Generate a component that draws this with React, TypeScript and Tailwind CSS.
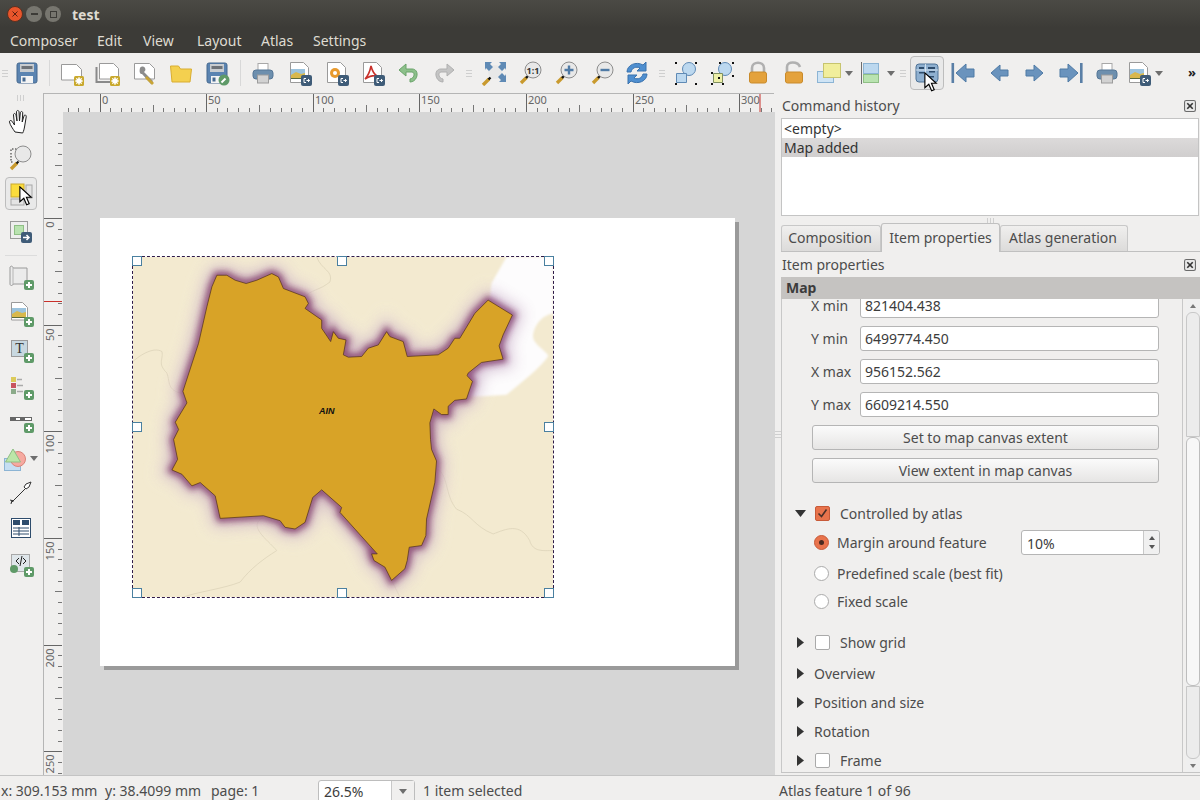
import type { ReactNode } from "react";

const FONT = "font-['Noto_Sans','Open_Sans',sans-serif]";

const PX_PER_MM = 2.1333;

function Ico({ children, size = 26 }: { children: ReactNode; size?: number }) {
  return (
    <svg width={size} height={size} viewBox="0 0 26 26" className="block shrink-0">
      {children}
    </svg>
  );
}

const PlusBadge = ({ x = 16, y = 16 }: { x?: number; y?: number }) => (
  <g transform={`translate(${x} ${y})`}>
    <rect width="10" height="10" rx="2" fill="#5f9a68" />
    <path d="M5 2v6M2 5h6" stroke="#fff" strokeWidth="2" />
  </g>
);

const ExportBadge = () => (
  <g transform="translate(14 15)">
    <rect width="11" height="11" rx="2" fill="#3f5c78" />
    <path d="M5 3.5H3v4h2M5.5 5.5h3M7 4l1.6 1.5L7 7" stroke="#fff" strokeWidth="1" fill="none" />
  </g>
);

const Gear = () => (
  <g transform="translate(15 16)">
    <rect width="10" height="10" rx="1.5" fill="#c9a92e" />
    <circle cx="5" cy="5" r="2.8" fill="#fff" />
    <path d="M5 1v8M1 5h8M2.2 2.2l5.6 5.6M7.8 2.2L2.2 7.8" stroke="#fff" strokeWidth="1" />
  </g>
);

const Sheet = ({ w = 18 }: { w?: number }) => (
  <path d={`M3.5 2.5h${w - 5}l5 5V22.5h-${w}z`} fill="#fff" stroke="#9a9a9a" />
);

const Floppy = () => (
  <>
    <rect x="3" y="3" width="20" height="20" rx="2" fill="#5b84b1" stroke="#46698f" />
    <rect x="6" y="4" width="14" height="8" fill="#c8ccd0" />
    <rect x="7.5" y="6" width="11" height="3" fill="#6d7278" />
    <rect x="7" y="16" width="12" height="7" fill="#f4f4f4" />
    <rect x="8.5" y="17.5" width="3" height="4" fill="#46698f" />
  </>
);

const Printer = () => (
  <>
    <rect x="8" y="3.5" width="10" height="7" fill="#fff" stroke="#a8a8a8" />
    <rect x="3" y="10" width="20" height="9" rx="3" fill="#6d8fae" stroke="#557696" />
    <rect x="7.5" y="15" width="11" height="8" fill="#d2d2d2" stroke="#9c9c9c" />
  </>
);

const Landscape = ({ x = 4, y = 9 }: { x?: number; y?: number }) => (
  <g transform={`translate(${x} ${y})`}>
    <rect width="14" height="10" fill="#9cc3dd" />
    <path d="M0 6l5-3 5 2 4-1v6H0z" fill="#d8b84c" />
    <path d="M0 9h14v1H0z" fill="#5b6a3a" />
  </g>
);

const Lens = ({ children }: { children?: ReactNode }) => (
  <>
    <path d="M4 23l5.5-5.5" stroke="#c99a2e" strokeWidth="3.4" />
    <path d="M9 18l2-2" stroke="#111" strokeWidth="2.4" />
    <circle cx="16" cy="10" r="8" fill="#e8e8e8" stroke="#8d8d8d" />
    {children}
  </>
);

const Lock = ({ open = false }: { open?: boolean }) => (
  <>
    <path
      d={open ? "M6 12V7c0-6 11-6 13 0" : "M7 13V8c0-7 12-7 12 0v5"}
      fill="none"
      stroke="#b0b0b0"
      strokeWidth="2.6"
    />
    <rect x="4.5" y="12" width="17" height="11" rx="2" fill="#e4a23c" stroke="#c98a2a" />
  </>
);

const NavArrow = ({ d, bar }: { d: string; bar?: number }) => (
  <>
    <path d={d} fill="#6a93bd" stroke="#4f7aa5" />
    {bar !== undefined && <rect x={bar} y="3" width="2.6" height="20" fill="#5a7fa6" />}
  </>
);

const DropArrow = () => (
  <svg width="8" height="5" viewBox="0 0 8 5" className="shrink-0">
    <path d="M0 0h8L4 5z" fill="#6e6e6e" />
  </svg>
);

function Grip({ vertical = false }: { vertical?: boolean }) {
  return (
    <div className={vertical ? "flex flex-col gap-[2px]" : "flex gap-[2px]"}>
      <div className={vertical ? "w-[6px] h-px bg-[#cfcfcf]" : "h-[6px] w-px bg-[#cfcfcf]"} />
      <div className={vertical ? "w-[6px] h-px bg-[#cfcfcf]" : "h-[6px] w-px bg-[#cfcfcf]"} />
      <div className={vertical ? "w-[6px] h-px bg-[#cfcfcf]" : "h-[6px] w-px bg-[#cfcfcf]"} />
    </div>
  );
}

const Cursor = () => (
  <svg width="14" height="21" viewBox="0 0 16 24" className="absolute">
    <path d="M1 1v17l4.5-4 3.2 7.5 3-1.3-3.2-7.3H14z" fill="#fff" stroke="#000" strokeWidth="1.3" />
  </svg>
);

// top toolbar, left to right
const topItems: { w: number; node?: ReactNode; grip?: boolean; sep?: boolean; active?: boolean; arrow?: boolean }[] = [
  { w: 9, grip: true },
  { w: 36, node: <Ico><Floppy /></Ico> },
  { w: 9, sep: true },
  { w: 36, node: <Ico><path d="M2.5 4.5h15l5 5V20h-20z" fill="#fff" stroke="#9a9a9a" /><Gear /></Ico> },
  { w: 36, node: <Ico><path d="M1.5 7v15h16" fill="none" stroke="#8a8a8a" strokeWidth="2" /><path d="M4.5 3.5h14l5 5V19h-19z" fill="#fff" stroke="#9a9a9a" /><Gear /></Ico> },
  { w: 37, node: <Ico><path d="M2.5 3.5h15l5 5V19h-20z" fill="#fff" stroke="#9a9a9a" /><path d="M8 8c1-2 4-2 5 0s0 3-1 4l9 9-2 3-9-10c-2 0-3-2-2-6z" fill="#8c8c8c" /><path d="M15 16l7 7-2 2-7-7z" fill="#c8a436" /></Ico> },
  { w: 36, node: <Ico><path d="M2.5 6h8l2 3h11l-1.5 13H4z" fill="#f4d04f" stroke="#d9ad30" /></Ico> },
  { w: 36, node: <Ico><Floppy /><circle cx="20" cy="20" r="5.5" fill="#5f9a68" /><path d="M17.5 22.5l4-4" stroke="#fff" strokeWidth="2" /></Ico> },
  { w: 10, sep: true },
  { w: 36, node: <Ico><Printer /></Ico> },
  { w: 37, node: <Ico><Sheet /><Landscape /><ExportBadge /></Ico> },
  { w: 37, node: <Ico><Sheet /><circle cx="11" cy="13" r="5" fill="#e89a2e" /><circle cx="11" cy="13" r="2" fill="#fff" /><ExportBadge /></Ico> },
  { w: 36, node: <Ico><Sheet /><path d="M11 6c-1 5-3 10-6 13 5-3 9-4 12-3-3-2-5-6-6-10z" fill="none" stroke="#c8302a" strokeWidth="1.6" /><ExportBadge /></Ico> },
  { w: 35, node: <Ico><path d="M10 4L3 10l7 6v-4h6c3 0 3 6-2 7v3c8 0 10-13 2-13h-6z" fill="#8cc08a" stroke="#6aa36a" /></Ico> },
  { w: 36, node: <Ico><path d="M16 4l7 6-7 6v-4h-6c-3 0-3 6 2 7v3c-8 0-10-13-2-13h6z" fill="#c4c4c4" stroke="#b0b0b0" /></Ico> },
  { w: 14, grip: true },
  { w: 36, node: <Ico><circle cx="14" cy="12" r="7" fill="#e8e8e8" /><path d="M4 2h7l-2 2 3 3-4 4-3-3-1 2zM25 2h-7l2 2-3 3 4 4 3-3 1 2zM25 22h-7l2-2-3-3 4-4 3 3 1-2z" fill="#5f8ab5" /><path d="M2 25l6-6" stroke="#c99a2e" strokeWidth="3.4" /><path d="M7.5 19.5l2-2" stroke="#111" strokeWidth="2.4" /></Ico> },
  { w: 36, node: <Ico><Lens /><text x="16" y="13.500" textAnchor="middle" fontSize="9" fontWeight="700" fontFamily="'Noto Sans', sans-serif" fill="#333">1:1</text></Ico> },
  { w: 36, node: <Ico><Lens /><path d="M16 5.5v9M11.5 10h9" stroke="#4f7aa5" strokeWidth="2.4" /></Ico> },
  { w: 35, node: <Ico><Lens /><path d="M11.5 10h9" stroke="#4f7aa5" strokeWidth="2.4" /></Ico> },
  { w: 36, node: <Ico><path d="M3 12C3 5 12 1 19 5l3-3v9h-9l3-3c-4-2-8 0-9 4z" fill="#4f8fd0" stroke="#3a72ad" /><path d="M23 14c0 7-9 11-16 7l-3 3v-9h9l-3 3c4 2 8 0 9-4z" fill="#4f8fd0" stroke="#3a72ad" /></Ico> },
  { w: 13, grip: true },
  { w: 36, node: <Ico><circle cx="16" cy="9" r="6.5" fill="#bcd8ef" stroke="#5f8ab5" /><path d="M3.5 13.5h10v9h-10z" fill="#bcd8ef" stroke="#5f8ab5" /><path d="M2 2h2v2H2zM22 2h2v2h-2zM2 23h2v2H2zM22 23h2v2h-2z" fill="#111" /></Ico> },
  { w: 36, node: <Ico><circle cx="16" cy="9" r="6.5" fill="#bcd8ef" stroke="#5f8ab5" /><path d="M4.5 13.5h9v9h-9z" fill="#eef0a8" stroke="#7f8f60" /><path d="M10 2h2v2h-2zM23 2h2v2h-2zM2 12h2v2H2zM9 17h2v2H9zM23 15h2v2h-2zM2 23h2v2H2zM13 23h2v2h-2z" fill="#111" /></Ico> },
  { w: 36, node: <Ico><Lock /></Ico> },
  { w: 36, node: <Ico><Lock open /></Ico> },
  { w: 44, arrow: true, node: <Ico><rect x="1.5" y="11.5" width="16" height="11" fill="#cfe4f5" stroke="#8cb4d4" /><rect x="7.5" y="3.5" width="17" height="14" fill="#f1ee9c" stroke="#c7c46e" /></Ico> },
  { w: 40, arrow: true, node: <Ico><path d="M3.5 2v22" stroke="#6e6e6e" /><rect x="5.5" y="3.5" width="15" height="10" fill="#bcd8ef" stroke="#8cb4d4" /><rect x="5.5" y="14.5" width="15" height="8" fill="#b9e3b0" stroke="#8fbf85" /></Ico> },
  { w: 13, grip: true },
  { w: 36, active: true, node: <Ico><rect x="2" y="4" width="22" height="18" rx="3" fill="#8fb0d0" stroke="#4f7296" /><path d="M5 7h5v2H5zM14 7h7v2h-7zM15 11h6v1.500h-6zM5 12h5v1.500H5zM14 16h6v1.500h-6z" fill="#2e4c6c" /><path d="M11.500 4v18M2 10h22" stroke="#e3edf5" strokeWidth=".8" /></Ico> },
  { w: 36, node: <Ico><NavArrow d="M6 13l10-9v5h8v8h-8v5z" bar={1.5} /></Ico> },
  { w: 36, node: <Ico><NavArrow d="M5 13l9-8v5h8v6h-8v5z" /></Ico> },
  { w: 36, node: <Ico><NavArrow d="M21 13l-9-8v5H4v6h8v5z" /></Ico> },
  { w: 36, node: <Ico><NavArrow d="M20 13L10 4v5H2v8h8v5z" bar={22} /></Ico> },
  { w: 36, node: <Ico><Printer /></Ico> },
  { w: 38, arrow: true, node: <Ico><Sheet /><Landscape /><ExportBadge /></Ico> },
];

const leftItems: { h: number; node?: ReactNode; active?: boolean; sep?: boolean; arrow?: boolean }[] = [
  { h: 36, node: <Ico><path d="M7 24c-2-3-5-7-5.500-10-.2-2 2-2 3 0l2 3-1-10c0-2 2-2 2.500 0l1 6-.5-9c0-2 2.500-2 2.500 0l.5 9 .8-8c.2-2 2.400-2 2.400 0l-.5 9 1.800-6c.5-2 2.500-1 2.200 1l-1.500 9c-.5 3-1 5-2 7z" fill="#fff" stroke="#222" /></Ico> },
  { h: 37, node: <Ico><path d="M3 6V4h8M3 8v9M3 17h3" stroke="#222" strokeDasharray="1.5 1.5" fill="none" /><path d="M3 24l6-6" stroke="#c99a2e" strokeWidth="3.4" /><path d="M8.500 18.500l2-2" stroke="#111" strokeWidth="2" /><circle cx="15" cy="9" r="8" fill="#e8e8e8" stroke="#8d8d8d" /></Ico> },
  { h: 35, active: true, node: <Ico><rect x="3" y="3" width="13" height="13" fill="#fbdc3c" stroke="#c9a92e" /><rect x="18" y="4" width="6" height="13" fill="#e4e4e4" stroke="#a8a8a8" /><rect x="3" y="18" width="13" height="6" fill="#e4e4e4" stroke="#a8a8a8" /></Ico> },
  { h: 41, node: <Ico><rect x="2.500" y="2.500" width="17" height="17" fill="#eeeeee" stroke="#9a9a9a" /><rect x="6.500" y="6.500" width="9" height="9" fill="#b9e3b0" stroke="#8fbf85" /><rect x="13" y="13" width="11" height="11" rx="2" fill="#3f5c78" /><path d="M15 18.500h6M18.500 16l2.500 2.500-2.500 2.500" stroke="#fff" strokeWidth="1.500" fill="none" /></Ico> },
  { h: 7, sep: true },
  { h: 36, node: <Ico><path d="M2 3c2-2 3 0 3 1h14v16H5c0 2-3 2-3 0z" fill="#ebebeb" stroke="#9a9a9a" /><path d="M5 4v16" stroke="#b5b5b5" /><PlusBadge /></Ico> },
  { h: 37, node: <Ico><path d="M3.500 1.500h11l5 5V19h-16z" fill="#fff" stroke="#9a9a9a" /><Landscape x={4} y={7} /><PlusBadge /></Ico> },
  { h: 36, node: <Ico><rect x="3.500" y="3.500" width="16" height="16" fill="#c8d8e0" stroke="#9a9a9a" /><text x="11.500" y="16" textAnchor="middle" fontFamily="'Liberation Serif', serif" fontSize="14" fill="#333">T</text><PlusBadge /></Ico> },
  { h: 37, node: <Ico><rect x="3" y="3" width="5" height="5" fill="#dccb5a" /><rect x="3" y="9" width="5" height="5" fill="#c8555f" /><rect x="3" y="15" width="5" height="5" fill="#8cab8a" /><path d="M9 5.500h5M9 11.500h6M9 17.500h6" stroke="#aaa" strokeWidth="1.500" /><PlusBadge /></Ico> },
  { h: 37, node: <Ico><rect x="2.500" y="6.500" width="21" height="3" fill="#fff" stroke="#666" /><path d="M3 8h5M12 8h5" stroke="#666" strokeWidth="3" /><PlusBadge y={12} /></Ico> },
  { h: 33, arrow: true, node: <Ico><rect x="1.500" y="12.500" width="16" height="12" fill="#c6def2" stroke="#8cb4d4" /><circle cx="15" cy="13" r="7.500" fill="#f6a9a0" stroke="#d98378" /><path d="M10 3l7.500 13h-15z" fill="#bce6a8" stroke="#8fbf85" /></Ico> },
  { h: 35, node: <Ico><path d="M3 23L20 6" stroke="#333" /><path d="M18 4l5-2-2 5-3 2-2-2z" fill="#fff" stroke="#333" /><path d="M2 20l4 1M3 24l1-4" stroke="#333" /></Ico> },
  { h: 36, node: <Ico><rect x="3.500" y="3.500" width="19" height="19" fill="#fff" stroke="#2e4c6c" /><path d="M5 5h7v5H5zM14 5h7v5h-7z" fill="#2e4c6c" /><path d="M5 13h16M5 16h16M5 19h16M11 12v9" stroke="#2e4c6c" /></Ico> },
  { h: 35, node: <Ico><rect x="3.500" y="3.500" width="18" height="17" fill="#dfe6ea" stroke="#a8a8a8" /><path d="M11 7l-3 3 3 3M15 7l3 3-3 3M14 5l-2 10" stroke="#222" fill="none" /><circle cx="6" cy="18" r="4" fill="#5f9a68" /><PlusBadge /></Ico> },
];

const mapOutline =
  "M290 105L320 105L345 120L378 130L410 120L455 100L475 110L490 145L555 170L565 190L555 205L605 240L605 265L632 305L640 275L655 295L678 300L670 345L685 352L725 350L745 325L775 315L800 275L810 290L850 305L862 350L955 345L985 325L1005 295L1020 295L1065 220L1105 180L1178 225L1150 285L1138 318L1150 358L1085 368L1045 400L1042 408L1058 425L1040 478L1005 482L985 500L985 525L965 525L942 508L930 550L932 600L935 630L950 665L945 730L920 840L918 890L905 920L868 925L862 965L855 990L815 1025L795 985L762 965L755 945L772 945L745 915L660 820L665 805L605 752L578 775L555 850L525 870L495 865L480 845L430 830L300 838L285 770L240 730L215 740L185 705L155 692L172 660L160 600L175 570L165 548L200 490L188 455L235 310L260 200L275 140Z";

function MapDrawing() {
  return (
    <svg viewBox="38 50 1262 1025" className="block w-full h-full" preserveAspectRatio="none">
      <defs>
        <filter id="glowWide" x="-20%" y="-20%" width="140%" height="140%">
          <feGaussianBlur stdDeviation="22" />
        </filter>
        <filter id="glowTight" x="-20%" y="-20%" width="140%" height="140%">
          <feGaussianBlur stdDeviation="9" />
        </filter>
        <filter id="edgeSoft" x="-20%" y="-20%" width="140%" height="140%">
          <feGaussianBlur stdDeviation="3" />
        </filter>
      </defs>
      <rect x="38" y="50" width="1262" height="1025" fill="#f3ead0" />
      <g fill="none" stroke="#d2c9ae" strokeWidth="2" opacity="0.8">
        <path d="M38 365C60 345 100 320 125 335C130 360 110 370 140 400C150 430 140 450 185 462" />
        <path d="M590 50C605 90 640 90 630 125C600 150 570 150 555 170" />
        <path d="M950 690C985 700 975 770 1010 810C1060 830 1060 860 1120 885C1160 870 1200 850 1230 905C1240 940 1270 935 1300 935" />
        <path d="M430 835C380 860 440 900 470 935C430 960 390 990 360 1030C310 1050 230 1060 190 1075" />
        <path d="M815 1025L840 1075" />
      </g>
      <path d={mapOutline} fill="#fbf6e6" stroke="#fbf6e6" strokeWidth="70" opacity="0.7" filter="url(#glowWide)" />
      <path
        d="M1160 50H1300V220C1265 225 1240 260 1240 290C1240 315 1290 340 1285 350C1260 385 1210 425 1160 465L1090 470L1040 470L1042 400L1110 180L1115 130Z"
        fill="#fdfcfd"
        filter="url(#edgeSoft)"
      />
      <path d={mapOutline} fill="none" stroke="#9a6a98" strokeWidth="50" opacity="0.45" filter="url(#glowWide)" />
      <path d={mapOutline} fill="none" stroke="#71245a" strokeWidth="20" opacity="0.8" filter="url(#glowTight)" />
      <path d={mapOutline} fill="#d8a327" stroke="#4b2c18" strokeWidth="2" />
    </svg>
  );
}

const handleBase = "absolute w-[10px] h-[10px] bg-white border border-[#4a80a0]";

function Handles() {
  return (
    <>
      <div className={`${handleBase} left-[-1px] top-[-1px]`} />
      <div className={`${handleBase} left-[204px] top-[-1px]`} />
      <div className={`${handleBase} right-[-1px] top-[-1px]`} />
      <div className={`${handleBase} left-[-1px] top-[165px]`} />
      <div className={`${handleBase} right-[-1px] top-[165px]`} />
      <div className={`${handleBase} left-[-1px] bottom-[-1px]`} />
      <div className={`${handleBase} left-[204px] bottom-[-1px]`} />
      <div className={`${handleBase} right-[-1px] bottom-[-1px]`} />
    </>
  );
}

function TopRuler() {
  const x0 = 56.5;
  const ticks = [];
  for (let mm = -15; mm <= 315; mm += 5) {
    const x = Math.round(x0 + mm * PX_PER_MM) + 0.5;
    if (x > 729) break;
    const major = mm % 50 === 0;
    const mid = mm % 25 === 0;
    ticks.push(<path key={mm} d={`M${x} 19V${major ? 0 : mid ? 12 : 15}`} stroke={major ? "#666" : "#777"} />);
    if (major && mm >= 0)
      ticks.push(
        <text key={`t${mm}`} x={x + 1.5} y={11} fontSize="11" fill="#666" fontFamily="'Noto Sans', sans-serif">
          {mm}
        </text>,
      );
  }
  return (
    <svg width="732" height="19" className="block shrink-0">
      {ticks}
      <path d="M717 0V19" stroke="#c8302a" />
      <path d="M.5 0V19M0 .5H731" stroke="#b5b5b5" fill="none" />
    </svg>
  );
}

function SideRuler() {
  const y0 = 106;
  const ticks = [];
  for (let mm = -40; mm <= 265; mm += 5) {
    const y = Math.round(y0 + mm * PX_PER_MM) + 0.5;
    if (y < 8 || y > 662) continue;
    const major = mm % 50 === 0;
    const mid = mm % 25 === 0;
    ticks.push(<path key={mm} d={`M19 ${y}H${major ? 0 : mid ? 12 : 15}`} stroke={major ? "#666" : "#777"} />);
    if (major && mm >= 0)
      ticks.push(
        <text
          key={`t${mm}`}
          transform={`translate(11 ${y + 3}) rotate(-90)`}
          textAnchor="end"
          fontSize="11"
          fill="#666"
          fontFamily="'Noto Sans', sans-serif"
        >
          {mm}
        </text>,
      );
  }
  return (
    <svg width="20" height="663" className="block shrink-0">
      {ticks}
      <path d="M0 189.500H19" stroke="#c8302a" />
      <path d="M.5 0V663" stroke="#b5b5b5" />
    </svg>
  );
}

function CloseBox() {
  return (
    <svg width="12" height="12" viewBox="0 0 11 11">
      <rect x=".5" y=".5" width="10" height="10" rx="1.500" fill="#e8e8e8" stroke="#6b6b6b" />
      <path d="M3 3l5 5M8 3L3 8" stroke="#333" strokeWidth="1.500" />
    </svg>
  );
}

function Arrow({ open = false }: { open?: boolean }) {
  return open ? (
    <svg width="11" height="7" viewBox="0 0 11 7" className="shrink-0">
      <path d="M0 0h11L5.500 7z" fill="#333" />
    </svg>
  ) : (
    <svg width="7" height="11" viewBox="0 0 7 11" className="shrink-0">
      <path d="M0 0l7 5.500L0 11z" fill="#333" />
    </svg>
  );
}

function Check({ checked = false }: { checked?: boolean }) {
  return checked ? (
    <div className="w-[15px] h-[15px] rounded-[2px] bg-[#e8734c] border border-[#c85a38] flex items-center justify-center shrink-0">
      <svg width="11" height="11" viewBox="0 0 11 11">
        <path d="M1.500 5.500l3 3 5-7" stroke="#4a3028" strokeWidth="1.600" fill="none" />
      </svg>
    </div>
  ) : (
    <div className="w-[15px] h-[15px] rounded-[2px] bg-white border border-[#aaa] shrink-0" />
  );
}

function Radio({ on = false }: { on?: boolean }) {
  return on ? (
    <div className="w-[15px] h-[15px] rounded-full bg-[#e8734c] border border-[#c85a38] flex items-center justify-center shrink-0">
      <div className="w-[5px] h-[5px] rounded-full bg-[#4a2a20]" />
    </div>
  ) : (
    <div className="w-[15px] h-[15px] rounded-full bg-white border border-[#aaa] shrink-0" />
  );
}

function CoordRow({ label, value }: { label: string; value: string }) {
  return (
    <div className="flex items-center h-[33px]">
      <div className="w-[49px] ml-[29px] shrink-0">{label}</div>
      <div className="w-[299px] h-[25px] bg-white border border-[#b5b5b5] rounded-[3px] flex items-center pl-[4px] text-[#3c3c3c]">
        {value}
      </div>
    </div>
  );
}

function PanelButton({ children }: { children: ReactNode }) {
  return (
    <div className="flex items-center h-[33px] pl-[30px]">
      <div className="w-[347px] h-[25px] rounded-[3px] border border-[#b5b5b5] bg-gradient-to-b from-[#fbfbfb] to-[#e6e5e4] flex items-center justify-center">
        {children}
      </div>
    </div>
  );
}

function PropertiesBody() {
  return (
    <div className="flex-1 overflow-hidden text-[#4c4c4c]">
      <div className="mt-[-10px]">
        <CoordRow label="X min" value="821404.438" />
        <CoordRow label="Y min" value="6499774.450" />
        <CoordRow label="X max" value="956152.562" />
        <CoordRow label="Y max" value="6609214.550" />
        <PanelButton>Set to map canvas extent</PanelButton>
        <PanelButton>View extent in map canvas</PanelButton>

        <div className="h-[13px]" />
        <div className="flex items-center h-[26px] pl-[13px]">
          <Arrow open />
          <div className="ml-[9px] mr-[10px]"><Check checked /></div>
          Controlled by atlas
        </div>
        <div className="flex items-center h-[33px] pl-[32px]">
          <Radio on />
          <div className="ml-[8px] w-[184px] mb-[1px]">Margin around feature</div>
          <div className="w-[139px] h-[25px] bg-white border border-[#b5b5b5] rounded-[3px] flex items-center pl-[5px] text-[#3c3c3c]">
            <div className="flex-1 mt-[1px]">10%</div>
            <div className="w-[16px] h-full border-l border-[#c8c8c8] bg-[#f0f0f0] flex flex-col items-center justify-around py-[3px] rounded-r-[3px]">
              <svg width="6" height="4" viewBox="0 0 6 4"><path d="M3 0l3 4H0z" fill="#555" /></svg>
              <svg width="6" height="4" viewBox="0 0 6 4"><path d="M0 0h6L3 4z" fill="#555" /></svg>
            </div>
          </div>
        </div>
        <div className="flex items-center h-[28px] pl-[32px]">
          <Radio />
          <div className="ml-[8px]">Predefined scale (best fit)</div>
        </div>
        <div className="flex items-center h-[28px] pl-[32px]">
          <Radio />
          <div className="ml-[8px]">Fixed scale</div>
        </div>

        <div className="h-[12px]" />
        <div className="flex items-center h-[31px] pl-[15px]">
          <Arrow />
          <div className="ml-[11px] mr-[10px]"><Check /></div>
          Show grid
        </div>
        <div className="flex items-center h-[30px] pl-[15px]">
          <Arrow />
          <div className="ml-[10px]">Overview</div>
        </div>
        <div className="flex items-center h-[29px] pl-[15px]">
          <Arrow />
          <div className="ml-[10px]">Position and size</div>
        </div>
        <div className="flex items-center h-[29px] pl-[15px]">
          <Arrow />
          <div className="ml-[10px]">Rotation</div>
        </div>
        <div className="flex items-center h-[29px] pl-[15px]">
          <Arrow />
          <div className="ml-[11px] mr-[10px]"><Check /></div>
          Frame
        </div>
      </div>
    </div>
  );
}

function Scrollbar() {
  return (
    <div className="w-[14px] shrink-0 ml-[3px] flex flex-col items-stretch bg-[#efefef]">
      <div className="h-[13px] flex items-center justify-center">
        <svg width="6" height="4" viewBox="0 0 6 4"><path d="M3 0l3 4H0z" fill="#777" /></svg>
      </div>
      <div className="h-[125px] border border-[#c8c8c8] rounded-t-[6px] bg-[#ececec]" />
      <div className="h-[249px] border border-[#bdbdbd] rounded-[6px] bg-[#f7f7f7]" />
      <div className="flex-1 border border-[#c8c8c8] rounded-b-[6px] bg-[#ececec]" />
      <div className="h-[13px] flex items-center justify-center">
        <svg width="6" height="4" viewBox="0 0 6 4"><path d="M0 0h6L3 4z" fill="#777" /></svg>
      </div>
    </div>
  );
}

export default function App() {
  return (
    <div className={`${FONT} w-[1200px] h-[800px] overflow-hidden bg-[#f0efee] flex flex-col text-[14px] text-[#4c4c4c]`}>
      {/* Title bar */}
      <div className="h-[28px] shrink-0 bg-gradient-to-b from-[#4b4a45] to-[#3c3b37] flex items-center pl-[7px] text-[#dfdbd2]">
        <div className="w-[16px] h-[16px] rounded-full bg-[#e9552b] border border-[#5a3020] flex items-center justify-center">
          <svg width="6" height="6" viewBox="0 0 6 6"><path d="M.5.500l5 5M5.500.500l-5 5" stroke="#5a2010" strokeWidth="1" /></svg>
        </div>
        <div className="w-[16px] h-[16px] rounded-full bg-[#77766f] ml-[3px] flex items-center justify-center">
          <div className="w-[7px] h-[1.500px] bg-[#3c3b37]" />
        </div>
        <div className="w-[16px] h-[16px] rounded-full bg-[#77766f] ml-[3px] flex items-center justify-center">
          <div className="w-[7px] h-[7px] border border-[#3c3b37]" />
        </div>
        <div className="ml-[11px] font-bold text-[14px]">test</div>
      </div>

      {/* Menu bar */}
      <div className="h-[25px] shrink-0 bg-[#3c3b37] flex items-center text-[#dfdbd2] pl-[10px]">
        <span className="w-[87px]">Composer</span>
        <span className="w-[46px]">Edit</span>
        <span className="w-[54px]">View</span>
        <span className="w-[64px]">Layout</span>
        <span className="w-[52px]">Atlas</span>
        <span>Settings</span>
      </div>

      {/* Top toolbar */}
      <div className="h-[40px] shrink-0 flex items-center relative">
        {topItems.map((it, i) => (
          <div key={i} className="shrink-0 flex items-center justify-center h-full" style={{ width: it.w }}>
            {it.grip && <Grip vertical />}
            {it.sep && <div className="w-px h-[26px] bg-[#d8d8d8]" />}
            {it.node && (
              <div
                className={
                  it.active
                    ? "w-[34px] h-[34px] rounded-[4px] border border-[#bdbdbd] bg-[#e9e9e9] flex items-center justify-center relative"
                    : "flex items-center gap-[3px]"
                }
              >
                {it.node}
                {it.arrow && <DropArrow />}
                {it.active && (
                  <div className="absolute left-[13px] top-[15px]">
                    <Cursor />
                  </div>
                )}
              </div>
            )}
          </div>
        ))}
        <div className="flex-1 flex justify-end pr-[4px] font-bold text-[#222] text-[13px]">»</div>
      </div>

      {/* Main row */}
      <div className="h-[682px] shrink-0 flex">
        {/* Left toolbar */}
        <div className="w-[43px] shrink-0 flex flex-col items-center pr-[2px]">
          <div className="h-[10px] flex items-center"><Grip /></div>
          {leftItems.map((it, i) => (
            <div key={i} className="w-full flex items-center justify-center shrink-0" style={{ height: it.h }}>
              {it.sep && <div className="w-[32px] h-px bg-[#dcdcdc]" />}
              {it.node && (
                <div
                  className={
                    it.active
                      ? "w-[32px] h-[33px] rounded-[4px] border border-[#bdbdbd] bg-[#e9e9e9] flex items-center justify-center relative"
                      : "flex items-center gap-[1px]"
                  }
                >
                  {it.node}
                  {it.arrow && <DropArrow />}
                  {it.active && (
                    <div className="absolute left-[13px] top-[8px]">
                      <Cursor />
                    </div>
                  )}
                </div>
              )}
            </div>
          ))}
        </div>

        {/* Rulers and canvas */}
        <div className="w-[732px] shrink-0 flex flex-col">
          <TopRuler />
          <div className="flex h-[663px]">
            <SideRuler />
            <div className="w-[712px] bg-[#d6d6d6] overflow-hidden">
              <div className="ml-[37px] mt-[106px] w-[635px] h-[448px] bg-white shadow-[4px_4px_0_#9a9a9a] pt-[38px] pl-[32px]">
                <div className="relative w-[422px] h-[342px] border border-dashed border-[#2e1a48]">
                  <MapDrawing />
                  <div className="absolute left-[186px] top-[148px] text-[9px] font-bold italic text-[#111] font-['Liberation_Sans',sans-serif]">
                    AIN
                  </div>
                  <Handles />
                </div>
              </div>
            </div>
          </div>
        </div>

        {/* Right docks */}
        <div className="w-[425px] shrink-0 flex">
          <div className="w-[6px] shrink-0 flex items-center justify-center">
            <Grip vertical />
          </div>
          <div className="w-[419px] flex flex-col">
            <div className="h-[25px] flex items-center justify-between pl-px pr-[4px]">
              Command history
              <CloseBox />
            </div>
            <div className="h-[98px] bg-white border border-[#c4c4c4] mr-px">
              <div className="h-[19px] flex items-center pl-[2px] text-[#333]">&lt;empty&gt;</div>
              <div className="h-[19px] flex items-center pl-[2px] bg-gradient-to-b from-[#dcdada] to-[#d0cece] text-[#333]">
                Map added
              </div>
            </div>
            <div className="h-[9px] flex items-center justify-center"><Grip /></div>
            {/* Tabs */}
            <div className="h-[27px] flex items-end border-b border-[#c0c0c0]">
              <div className="w-[100px] h-[26px] pb-[2px] pr-[2px] border border-b-0 border-[#c8c8c8] rounded-t-[3px] bg-gradient-to-b from-[#f0efee] to-[#dcdbda] flex items-center justify-center">
                Composition
              </div>
              <div className="w-[119px] h-[29px] mb-[-1px] pb-[2px] border border-b-0 border-[#c0c0c0] rounded-t-[3px] bg-[#f0efee] flex items-center justify-center">
                Item properties
              </div>
              <div className="w-[128px] h-[26px] pb-[2px] pr-[2px] border border-b-0 border-[#c8c8c8] rounded-t-[3px] bg-gradient-to-b from-[#f0efee] to-[#dcdbda] flex items-center justify-center">
                Atlas generation
              </div>
            </div>
            <div className="h-[25px] flex items-center justify-between pl-px pr-[4px]">
              Item properties
              <CloseBox />
            </div>
            <div className="h-[22px] bg-[#c5c3c1] flex items-center pl-[5px] pb-[2px] font-bold text-[#3c3c3c]">Map</div>
            {/* Scrollable properties */}
            <div className="h-[474px] flex border-b border-[#c4c4c4]">
              <div className="w-[402px] flex border-l border-r border-[#c8c8c8] overflow-hidden">
                <PropertiesBody />
              </div>
              <Scrollbar />
            </div>
          </div>
        </div>
      </div>

      {/* Status bar */}
      <div className="flex-1 flex items-start border-t border-[#c4c4c4] overflow-visible relative">
        <div className="w-[105px] pt-[5px] pl-px leading-[20px] whitespace-nowrap">x: 309.153 mm</div>
        <div className="w-[106px] pt-[5px] leading-[20px] whitespace-nowrap">y: 38.4099 mm</div>
        <div className="w-[107px] pt-[5px] leading-[20px] whitespace-nowrap">page: 1</div>
        <div className="w-[97px] h-[30px] mt-[4px] border border-[#bdbdbd] rounded-[3px] bg-white flex">
          <div className="w-[73px] pl-[5px] pt-[1px] leading-[20px] border-r border-[#c8c8c8] text-[#3c3c3c]">26.5%</div>
          <div className="flex-1 pt-[8px] pl-[7px] bg-[#f0efee]"><DropArrow /></div>
        </div>
        <div className="w-[356px] pl-[8px] pt-[5px] leading-[20px] whitespace-nowrap">1 item selected</div>
        <div className="pl-[8px] pt-[5px] leading-[20px] whitespace-nowrap">Atlas feature 1 of 96</div>
      </div>
    </div>
  );
}
